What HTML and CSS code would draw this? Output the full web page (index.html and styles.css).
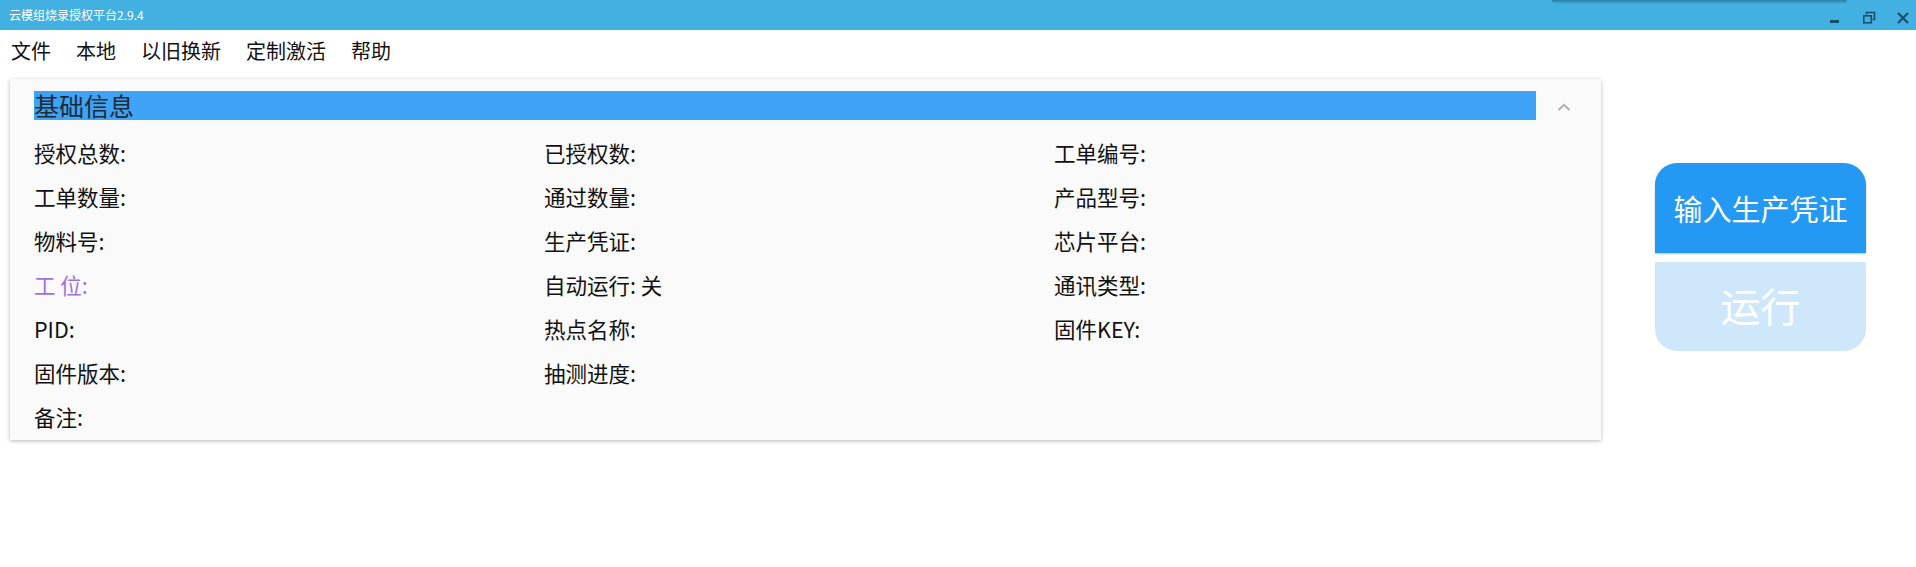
FILE: index.html
```html
<!DOCTYPE html>
<html lang="zh-CN">
<head>
<meta charset="utf-8">
<title>云模组烧录授权平台2.9.4</title>
<link rel="stylesheet" href="styles.css">
</head>
<body>
<div class="titlebar">
  <div class="title">云模组烧录授权平台2.9.4</div>
  <div class="shade"></div>
  <div class="controls">
    <svg class="ctl" width="14" height="14" viewBox="0 0 14 14"><rect x="2" y="9" width="9" height="3" fill="#1b4d6b"/></svg>
    <svg class="ctl" width="14" height="14" viewBox="0 0 14 14"><path d="M4.5 3.5V1.5H12.5V8.5H10.5" fill="none" stroke="#1b4d6b" stroke-width="1.6"/><rect x="1.8" y="4.8" width="7.5" height="7" fill="none" stroke="#1b4d6b" stroke-width="1.6"/></svg>
    <svg class="ctl" width="14" height="14" viewBox="0 0 14 14"><path d="M2 2L12 12M12 2L2 12" stroke="#1b4d6b" stroke-width="2.2"/></svg>
  </div>
</div>
<div class="menubar">
  <span class="menu">文件</span>
  <span class="menu">本地</span>
  <span class="menu">以旧换新</span>
  <span class="menu">定制激活</span>
  <span class="menu">帮助</span>
</div>
<div class="main">
  <div class="card">
    <div class="card-head">
      <div class="head-bar">基础信息</div>
      <div class="head-toggle">
        <svg width="14" height="8" viewBox="0 0 14 8"><path d="M1.5 7L7 1.8L12.5 7" fill="none" stroke="#b0b0b0" stroke-width="2"/></svg>
      </div>
    </div>
    <div class="info-grid">
      <div class="cell">授权总数:</div>
      <div class="cell">已授权数:</div>
      <div class="cell">工单编号:</div>
      <div class="cell">工单数量:</div>
      <div class="cell">通过数量:</div>
      <div class="cell">产品型号:</div>
      <div class="cell">物料号:</div>
      <div class="cell">生产凭证:</div>
      <div class="cell">芯片平台:</div>
      <div class="cell purple">工 位:</div>
      <div class="cell">自动运行: 关</div>
      <div class="cell">通讯类型:</div>
      <div class="cell">PID:</div>
      <div class="cell">热点名称:</div>
      <div class="cell">固件KEY:</div>
      <div class="cell">固件版本:</div>
      <div class="cell">抽测进度:</div>
      <div class="cell"></div>
      <div class="cell">备注:</div>
    </div>
  </div>
  <div class="actions">
    <div class="btn btn-primary">输入生产凭证</div>
    <div class="btn btn-run">运行</div>
  </div>
</div>
</body>
</html>
```
FILE: styles.css
```css
* { box-sizing: border-box; }
html, body {
  margin: 0;
  padding: 0;
  background: #ffffff;
  width: 1916px;
  height: 567px;
  overflow: hidden;
  font-family: "Noto Sans CJK SC", "Noto Sans", sans-serif;
  color: #111111;
}
.titlebar {
  position: relative;
  height: 30px;
  background: #42b1e1;
  display: flex;
  align-items: center;
  justify-content: space-between;
  padding-left: 9px;
}
.title {
  font-size: 12px;
  line-height: 30px;
  color: #ffffff;
}
.shade {
  position: absolute;
  left: 1552px;
  top: 0;
  width: 295px;
  height: 4px;
  background: linear-gradient(to bottom, rgba(20, 60, 90, 0.45), rgba(20, 60, 90, 0));
  border-radius: 0 0 6px 6px;
}
.controls {
  display: flex;
  align-items: center;
  gap: 20px;
  padding-right: 6px;
  padding-top: 5px;
}
.ctl { display: block; }
.menubar {
  height: 42px;
  display: flex;
  align-items: center;
  gap: 25px;
  padding-left: 11px;
}
.menu {
  font-size: 20px;
  line-height: 42px;
  color: #111111;
}
.main {
  display: flex;
  align-items: flex-start;
}
.card {
  margin-left: 10px;
  margin-top: 7px;
  width: 1591px;
  height: 361px;
  background: #fafafa;
  box-shadow: 0 1px 4px rgba(0, 0, 0, 0.28);
  padding-top: 12px;
  padding-left: 24px;
}
.card-head {
  display: flex;
  align-items: center;
  height: 29px;
}
.head-bar {
  flex: 1;
  height: 29px;
  background: #3ea2f5;
  font-size: 25px;
  line-height: 28px;
  color: #1e2a36;
}
.head-toggle {
  width: 65px;
  display: flex;
  justify-content: flex-start;
  padding-left: 21px;
  padding-top: 2px;
}
.head-toggle svg { display: block; }
.info-grid {
  margin-top: 11px;
  display: grid;
  grid-template-columns: 510px 510px 510px;
  grid-auto-rows: 44px;
}
.cell {
  font-size: 21.5px;
  line-height: 44px;
  color: #111111;
  white-space: pre;
}
.purple { color: #9b72e0; }
.actions {
  margin-left: 54px;
  margin-top: 91px;
  width: 211px;
  display: flex;
  flex-direction: column;
  gap: 9px;
}
.btn {
  display: flex;
  align-items: center;
  justify-content: center;
  color: #ffffff;
}
.btn-primary {
  height: 90px;
  background: #2399f3;
  border-radius: 22px 22px 0 0;
  font-size: 29px;
  box-shadow: 0 1px 2px rgba(0, 0, 0, 0.25);
}
.btn-run {
  height: 89px;
  background: #cfe7fa;
  border-radius: 0 0 22px 22px;
  font-size: 40px;
  padding-bottom: 4px;
}
```
